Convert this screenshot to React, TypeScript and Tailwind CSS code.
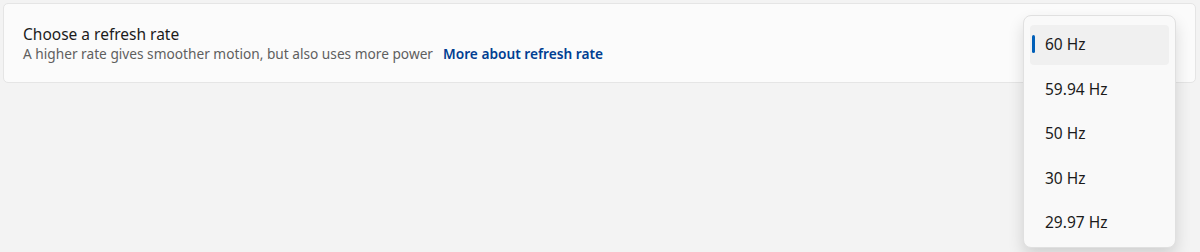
import React from 'react';

const rates = ['60 Hz', '59.94 Hz', '50 Hz', '30 Hz', '29.97 Hz'];

const App: React.FC = () => {
  const selected = '60 Hz';

  return (
    <div
      className="w-[1200px] h-[252px] bg-[#f3f3f3] pt-[3px] px-[3px] relative overflow-hidden"
      style={{ fontFamily: '"Segoe UI", "Noto Sans", sans-serif' }}
    >
      {/* Setting card */}
      <div className="h-[80px] w-[1193px] bg-[#fbfbfb] border border-[#e5e5e5] rounded-[5px] flex items-center pl-[19px]">
        <div className="flex flex-col pt-[1px]">
          <span className="text-[15.5px] leading-[20px] text-[#1b1b1b]">Choose a refresh rate</span>
          <div className="flex items-center text-[13.7px] leading-[20px]">
            <span className="text-[#5f5f5f]">A higher rate gives smoother motion, but also uses more power</span>
            <a className="ml-[10px] font-semibold text-[#003e92]">More about refresh rate</a>
          </div>
        </div>
      </div>

      {/* Dropdown menu */}
      <div className="absolute left-[1023px] top-[15px] w-[153px] h-[233px] bg-[#f9f9f9] border border-[#e0e0e0] rounded-[8px] shadow-[0_8px_16px_rgba(0,0,0,0.14)] pt-[9px] px-[6px] flex flex-col gap-[4.5px]">
        {rates.map((r) => (
          <div
            key={r}
            className={`relative h-[40px] rounded-[4px] flex items-center pl-[15px] text-[15.5px] text-[#1b1b1b] ${
              r === selected ? 'bg-[#f0f0f0]' : ''
            }`}
          >
            {r === selected && (
              <span className="absolute left-[2px] top-[10px] w-[3px] h-[18px] rounded-full bg-[#005fb8]" />
            )}
            {r}
          </div>
        ))}
      </div>
    </div>
  );
};

export default App;
